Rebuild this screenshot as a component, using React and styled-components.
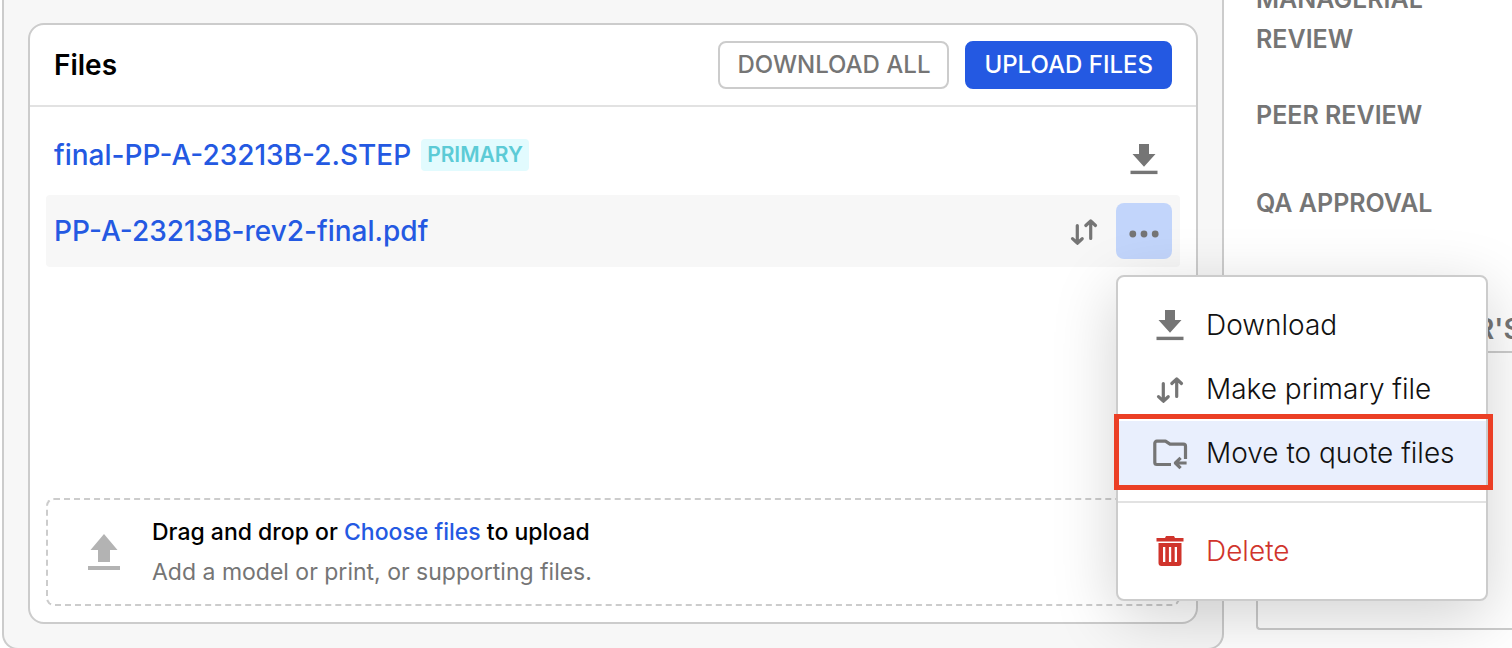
import React from "react";
import styled, { createGlobalStyle, css } from "styled-components";

const colors = {
  blue: "#2459e2",
  blueSoft: "#c2d5fb",
  blueHover: "#e9effd",
  gray: "#757575",
  grayLight: "#b3b3b3",
  border: "#cccccc",
  divider: "#e2e2e2",
  surface: "#f7f7f7",
  danger: "#d0342c",
  callout: "#eb3f25",
};

const GlobalStyle = createGlobalStyle`
  *, *::before, *::after {
    box-sizing: border-box;
  }

  html, body {
    margin: 0;
    overflow: hidden;
    background: #fff;
  }

  body {
    font-family: Inter, "Liberation Sans", sans-serif;
    font-size: 28px;
    color: #000;
  }
`;

const Page = styled.div`
  display: grid;
  grid-template-columns: minmax(0, 1fr) 288px;
  align-items: start;
  padding-left: 2px;
`;

const Panel = styled.main`
  padding: 23px 24px 24px;
  background: ${colors.surface};
  border: 2px solid ${colors.border};
  border-top: none;
  border-radius: 0 0 16px 16px;
`;

const Card = styled.section`
  background: #fff;
  border: 2px solid ${colors.border};
  border-radius: 16px;
`;

const CardHeader = styled.header`
  display: flex;
  align-items: center;
  gap: 16px;
  padding: 16px 24px;
  border-bottom: 2px solid ${colors.divider};
`;

const CardTitle = styled.h2`
  flex: 1;
  margin: 0;
  font-size: 28px;
  line-height: 40px;
  font-weight: 600;
`;

const Button = styled.button`
  height: 48px;
  padding: 0 17px;
  font-family: inherit;
  font-size: 24px;
  line-height: 40px;
  font-weight: 500;
  white-space: nowrap;
  text-transform: uppercase;
  color: ${({ $primary }) => ($primary ? "#fff" : colors.gray)};
  background: ${({ $primary }) => ($primary ? colors.blue : "#fff")};
  border: 2px solid ${({ $primary }) => ($primary ? colors.blue : colors.border)};
  border-radius: 8px;
  cursor: pointer;
`;

const CardBody = styled.div`
  padding: 16px;
`;

const FileList = styled.ul`
  min-height: 375px;
  margin: 0;
  padding: 0;
  list-style: none;
`;

const FileRow = styled.li`
  display: flex;
  align-items: center;
  gap: 4px;
  padding: 8px;
  border-radius: 4px;
  background: ${({ $active }) => ($active ? colors.surface : "transparent")};
`;

const FileName = styled.div`
  flex: 1;
  display: flex;
  align-items: center;
  gap: 10px;
  min-width: 0;
  padding-bottom: ${({ $tagged }) => ($tagged ? "8px" : "0")};
`;

const FileLink = styled.a`
  font-size: 28px;
  line-height: 40px;
  font-weight: 500;
  color: ${colors.blue};
  text-decoration: none;
`;

const Badge = styled.span`
  padding: 0 6px;
  font-size: 21px;
  line-height: 32px;
  font-weight: 600;
  color: #5ccbd6;
  background: #e2fbfe;
  border-radius: 4px;
`;

const IconButton = styled.button`
  display: flex;
  align-items: center;
  justify-content: center;
  width: 56px;
  height: 56px;
  padding: 0;
  color: ${colors.gray};
  background: ${({ $open }) => ($open ? colors.blueSoft : "transparent")};
  border: none;
  border-radius: 8px;
  cursor: pointer;
`;

const MenuAnchor = styled.div`
  position: relative;
`;

const Menu = styled.div`
  position: absolute;
  top: calc(100% + 16px);
  left: 0;
  z-index: 10;
  width: 372px;
  padding: 16px 0;
  background: #fff;
  border: 2px solid ${colors.border};
  border-radius: 8px;
  box-shadow: 0 16px 64px rgba(0, 0, 0, 0.18);
`;

const MenuItem = styled.button`
  position: relative;
  display: flex;
  align-items: center;
  gap: 18px;
  width: 100%;
  height: 64px;
  padding: 0 34px;
  font-family: inherit;
  font-size: 28px;
  font-weight: 350;
  white-space: nowrap;
  text-align: left;
  color: ${({ $danger }) => ($danger ? colors.danger : "#111")};
  background: ${({ $hovered }) => ($hovered ? colors.blueHover : "transparent")};
  border: none;
  cursor: pointer;

  svg {
    flex: none;
    color: ${({ $danger }) => ($danger ? colors.danger : colors.gray)};
  }

  ${({ $callout }) =>
    $callout &&
    css`
      &::after {
        content: "";
        position: absolute;
        inset: -7px -7px -5px -4px;
        border: 5px solid ${colors.callout};
      }
    `}
`;

const MenuDivider = styled.hr`
  height: 2px;
  margin: 16px 0;
  background: ${colors.divider};
  border: none;
`;

const DropZone = styled.div`
  display: flex;
  align-items: center;
  gap: 24px;
  padding: 12px 32px;
  border: 2px dashed ${colors.border};
  border-radius: 8px;
  color: ${colors.grayLight};
`;

const DropText = styled.p`
  margin: 0;
  font-size: 23px;
  line-height: 40px;
  font-weight: ${({ $muted }) => ($muted ? 400 : 500)};
  color: ${({ $muted }) => ($muted ? colors.gray : "#000")};

  a {
    color: ${colors.blue};
    text-decoration: none;
  }
`;

const Sidebar = styled.aside`
  margin-top: -33px;
  padding-left: 32px;
  overflow: hidden;
`;

const Step = styled.div`
  display: flex;
  align-items: center;
  min-height: 88px;
  padding: 12px 64px 12px 0;
  font-size: 25px;
  line-height: 40px;
  font-weight: 600;
  white-space: ${({ $wrap }) => ($wrap ? "normal" : "nowrap")};
  color: ${colors.gray};
`;

const NotesLabel = styled.label`
  display: block;
  margin-top: 60px;
  padding-left: 220px;
  font-size: 28px;
  line-height: 44px;
  font-weight: 600;
  white-space: nowrap;
  color: ${colors.gray};
`;

const Notes = styled.textarea`
  display: block;
  width: 100%;
  height: 279px;
  resize: none;
  background: #fff;
  border: 2px solid ${colors.border};
  border-right: none;
  border-radius: 4px 0 0 4px;
`;

const Icon = ({ size = 36, children }) => (
  <svg width={size} height={size} viewBox={`0 0 ${size} ${size}`} fill="currentColor" aria-hidden="true">
    {children}
  </svg>
);

const DownloadIcon = () => (
  <Icon>
    <path d="M13 3h10v10h6.5L18 25.8 6.5 13H13z" />
    <path d="M4.5 29.7h27v3.4h-27z" />
  </Icon>
);

const SwapIcon = () => (
  <Icon>
    <g fill="none" stroke="currentColor" strokeWidth="3.2" strokeLinecap="round" strokeLinejoin="round">
      <path d="M11.3 12.5V30M6.5 25.7l4.8 4.5 4.9-4.5" />
      <path d="M24.7 25.5V8M19.8 12.5L24.7 8l4.8 4.5" />
    </g>
  </Icon>
);

const MoreIcon = () => (
  <Icon>
    <circle cx="6.8" cy="21" r="3.4" />
    <circle cx="18" cy="21" r="3.4" />
    <circle cx="29.2" cy="21" r="3.4" />
  </Icon>
);

const FolderMoveIcon = () => (
  <Icon>
    <g fill="none" stroke="currentColor" strokeWidth="3.2" strokeLinejoin="round">
      <path d="M19 29.5H4.8a2 2 0 0 1-2-2V8.2a2 2 0 0 1 2-2h8.7l4.5 3h13.5a2 2 0 0 1 2 2V24" />
      <path d="M34.6 28H24M28.6 22.8L23.4 28l5.2 5.2" />
    </g>
  </Icon>
);

const TrashIcon = () => (
  <Icon>
    <path d="M4.5 5H13l1-2h8l1 2h8.5v3.5h-27z" />
    <path
      fillRule="evenodd"
      d="M6.500 10h23v20a3 3 0 0 1-3 3h-17a3 3 0 0 1-3-3zM11 14v15h2.3V14zM16.9 14v15h2.3V14zM22.7 14v15H25V14z"
    />
  </Icon>
);

const UploadIcon = () => (
  <Icon size={48}>
    <path d="M24 6l13.5 16H30v12H18V22h-7.5z" />
    <path d="M8 38h32v4H8z" />
  </Icon>
);

const FileMenu = () => (
  <Menu role="menu">
    <MenuItem type="button" role="menuitem">
      <DownloadIcon />
      Download
    </MenuItem>
    <MenuItem type="button" role="menuitem">
      <SwapIcon />
      Make primary file
    </MenuItem>
    <MenuItem type="button" role="menuitem" $hovered $callout>
      <FolderMoveIcon />
      Move to quote files
    </MenuItem>
    <MenuDivider />
    <MenuItem type="button" role="menuitem" $danger>
      <TrashIcon />
      Delete
    </MenuItem>
  </Menu>
);

const App = () => {
  return (
    <>
      <GlobalStyle />
      <Page>
        <Panel>
          <Card>
            <CardHeader>
              <CardTitle>Files</CardTitle>
              <Button type="button">Download all</Button>
              <Button type="button" $primary>
                Upload files
              </Button>
            </CardHeader>

            <CardBody>
              <FileList>
                <FileRow>
                  <FileName $tagged>
                    <FileLink href="#step">final-PP-A-23213B-2.STEP</FileLink>
                    <Badge>PRIMARY</Badge>
                  </FileName>
                  <IconButton type="button" aria-label="Download">
                    <DownloadIcon />
                  </IconButton>
                </FileRow>
                <FileRow $active>
                  <FileName>
                    <FileLink href="#pdf">PP-A-23213B-rev2-final.pdf</FileLink>
                  </FileName>
                  <IconButton type="button" aria-label="Make primary file">
                    <SwapIcon />
                  </IconButton>
                  <MenuAnchor>
                    <IconButton type="button" aria-label="More actions" aria-expanded="true" $open>
                      <MoreIcon />
                    </IconButton>
                    <FileMenu />
                  </MenuAnchor>
                </FileRow>
              </FileList>

              <DropZone>
                <UploadIcon />
                <div>
                  <DropText>
                    Drag and drop or <a href="#choose">Choose files</a> to upload
                  </DropText>
                  <DropText $muted>Add a model or print, or supporting files.</DropText>
                </div>
              </DropZone>
            </CardBody>
          </Card>
        </Panel>

        <Sidebar>
          <Step $wrap>MANAGERIAL REVIEW</Step>
          <Step>PEER REVIEW</Step>
          <Step>QA APPROVAL</Step>
          <NotesLabel htmlFor="notes">R'S</NotesLabel>
          <Notes id="notes" />
        </Sidebar>
      </Page>
    </>
  );
};

export default App;
